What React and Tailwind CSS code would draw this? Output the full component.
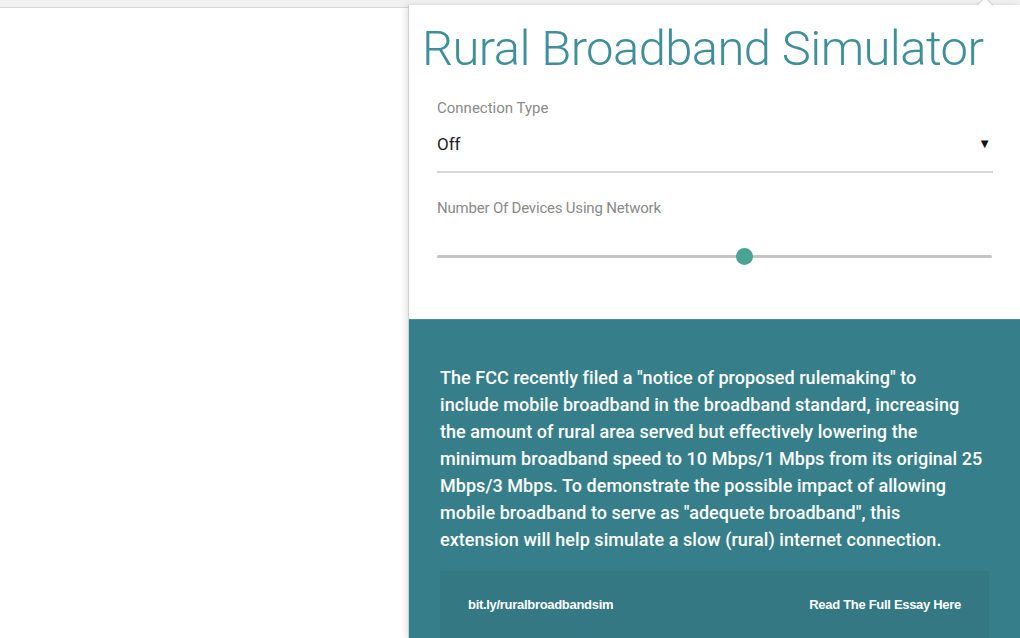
import React from "react";

const lines = [
  'The FCC recently filed a "notice of proposed rulemaking" to',
  "include mobile broadband in the broadband standard, increasing",
  "the amount of rural area served but effectively lowering the",
  "minimum broadband speed to 10 Mbps/1 Mbps from its original 25",
  "Mbps/3 Mbps. To demonstrate the possible impact of allowing",
  'mobile broadband to serve as "adequete broadband", this',
  "extension will help simulate a slow (rural) internet connection.",
];

export default function App() {
  return (
    <div className="relative w-[1020px] h-[638px] overflow-hidden bg-white" style={{ fontFamily: "Roboto, 'Liberation Sans', sans-serif" }}>
      <div className="h-[8px] bg-[#f1f1f1] border-b border-[#d8d8d8]" />
      {/* popup */}
      <div className="absolute left-[408px] top-[5px] right-0 bottom-0 bg-white border-l border-[#cfcfcf] shadow-[-2px_0_6px_rgba(0,0,0,0.12)] flex flex-col">
        {/* arrow */}
        <div className="absolute -top-[6px] left-[570px] w-[12px] h-[12px] bg-white rotate-45 border-l border-t border-[#d0d0d0]" />
        <h1 className="relative pl-[13px] pt-[14px] text-[49px] leading-[60px] font-light text-[#3f8f9b] tracking-[-0.6px] whitespace-nowrap">
          Rural Broadband Simulator
        </h1>
        <div className="relative pl-[28px] pr-[27px] pt-[21px]">
          <div className="text-[15px] leading-[16px] text-[#8a8a8a]">Connection Type</div>
          <div className="mt-[18px] flex items-center justify-between border-b-2 border-[#d6d6d6] pb-[17px]">
            <span className="text-[17px] leading-[20px] text-[#222]">Off</span>
            <span className="text-[13px] leading-[16px] text-[#111] mr-[2px]">▼</span>
          </div>
          <div className="mt-[27px] text-[15px] leading-[16px] text-[#8a8a8a] tracking-[-0.2px]">Number Of Devices Using Network</div>
          <div className="relative mt-[32px] h-[17px] flex items-center pr-[1px]">
            <div className="h-[3px] w-full bg-[#c4c4c4] rounded-full" />
            <div className="absolute left-[299px] top-0 w-[17px] h-[17px] rounded-full bg-[#48a392]" />
          </div>
        </div>
        <div className="mt-auto h-[319px] bg-[#367f8a] border-t border-[#4a9099] px-[31px] pt-[44px]">
          <p className="text-[18px] leading-[27px] font-medium text-white tracking-[0.05px] whitespace-nowrap">
            {lines.map((l, i) => (
              <span key={i} className="block">{l}</span>
            ))}
          </p>
          <div className="mt-[18px] h-[70px] bg-[#337883] flex justify-between items-start pt-[26px] px-[28px] text-[13px] leading-[16px] text-white tracking-[-0.3px]" style={{ fontFamily: "'Liberation Sans', Arial, sans-serif", fontWeight: 600 }}>
            <span>bit.ly/ruralbroadbandsim</span>
            <span>Read The Full Essay Here</span>
          </div>
        </div>
      </div>
    </div>
  );
}
